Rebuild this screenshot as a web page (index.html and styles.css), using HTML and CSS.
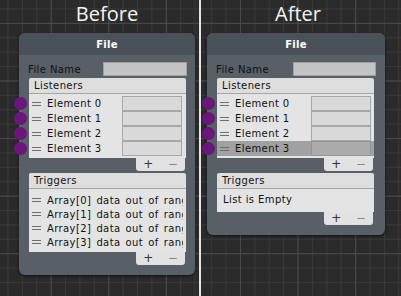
FILE: index.html
```html
<html lang="en">
  <head>
    <meta charset="UTF-8" />
    <meta name="viewport" content="width=device-width, initial-scale=1.0" />
    <title>Before / After</title>
    <link rel="stylesheet" href="styles.css">
  </head>
  <body>
    <div class="stage">
      <section class="half half-before">
        <div class="column column-before">
          <h1 class="caption">Before</h1>
          <div class="node">
            <div class="node-title">File</div>
            <div class="node-body body-before">
              <div class="field-row">
                <label>File Name</label>
                <div class="text-input"></div>
              </div>
              <div class="list">
                <div class="list-header">Listeners</div>
                <div class="list-body">
                  <div class="list-item"><span class="port"></span><span class="handle"></span><span class="item-label">Element 0</span><span class="object-field"></span></div>
                  <div class="list-item"><span class="port"></span><span class="handle"></span><span class="item-label">Element 1</span><span class="object-field"></span></div>
                  <div class="list-item"><span class="port"></span><span class="handle"></span><span class="item-label">Element 2</span><span class="object-field"></span></div>
                  <div class="list-item"><span class="port"></span><span class="handle"></span><span class="item-label">Element 3</span><span class="object-field"></span></div>
                </div>
              </div>
              <div class="list-footer"><span class="add">+</span><span class="remove">&minus;</span></div>
              <div class="list">
                <div class="list-header">Triggers</div>
                <div class="list-body triggers">
                  <div class="list-item short"><span class="handle"></span><span class="item-label">Array[0] data out of range</span></div>
                  <div class="list-item short"><span class="handle"></span><span class="item-label">Array[1] data out of range</span></div>
                  <div class="list-item short"><span class="handle"></span><span class="item-label">Array[2] data out of range</span></div>
                  <div class="list-item short"><span class="handle"></span><span class="item-label">Array[3] data out of range</span></div>
                </div>
              </div>
              <div class="list-footer"><span class="add">+</span><span class="remove">&minus;</span></div>
            </div>
          </div>
        </div>
      </section>
      <div class="divider"></div>
      <section class="half half-after">
        <div class="column column-after">
          <h1 class="caption">After</h1>
          <div class="node">
            <div class="node-title">File</div>
            <div class="node-body body-after">
              <div class="field-row">
                <label>File Name</label>
                <div class="text-input"></div>
              </div>
              <div class="list">
                <div class="list-header">Listeners</div>
                <div class="list-body">
                  <div class="list-item"><span class="port"></span><span class="handle"></span><span class="item-label">Element 0</span><span class="object-field"></span></div>
                  <div class="list-item"><span class="port"></span><span class="handle"></span><span class="item-label">Element 1</span><span class="object-field"></span></div>
                  <div class="list-item"><span class="port"></span><span class="handle"></span><span class="item-label">Element 2</span><span class="object-field"></span></div>
                  <div class="list-item selected"><span class="port"></span><span class="handle"></span><span class="item-label">Element 3</span><span class="object-field"></span></div>
                </div>
              </div>
              <div class="list-footer"><span class="add">+</span><span class="remove">&minus;</span></div>
              <div class="list">
                <div class="list-header">Triggers</div>
                <div class="list-body empty">
                  <div class="empty-label">List is Empty</div>
                </div>
              </div>
              <div class="list-footer"><span class="add">+</span><span class="remove">&minus;</span></div>
            </div>
          </div>
        </div>
      </section>
    </div>
  </body>
</html>
```

FILE: styles.css
```css
body {
  margin: 0;
  background-color: #2b2b2b;
  font-family: "DejaVu Sans", Verdana, sans-serif;
}

.stage {
  display: flex;
  width: 401px;
  height: 296px;
  overflow: hidden;
}

.half {
  height: 296px;
  background-color: #2a2a2a;
  background-image:
    linear-gradient(to right, #4a4a4a 1px, transparent 1px),
    linear-gradient(to bottom, #4a4a4a 1px, transparent 1px),
    linear-gradient(to right, #393939 1px, transparent 1px),
    linear-gradient(to bottom, #393939 1px, transparent 1px);
  background-size: 57.6px 57.6px, 57.6px 57.6px, 14.4px 14.4px, 14.4px 14.4px;
}

.half-before {
  width: 199px;
  padding-left: 19px;
  box-sizing: border-box;
  background-position: 50.7px 22.9px, 50.7px 22.9px, 7.5px 8.5px, 7.5px 8.5px;
}

.half-after {
  flex: 1;
  padding-left: 6px;
  box-sizing: border-box;
  background-position: 39px 22.9px, 39px 22.9px, 10.2px 8.5px, 10.2px 8.5px;
}

.divider {
  width: 2px;
  background-color: #e4e4e4;
}

.column-before {
  width: 176px;
}

.column-after {
  width: 178px;
}

.caption {
  margin: 0;
  height: 33px;
  padding-top: 2px;
  box-sizing: border-box;
  font-family: "Open Sans", sans-serif;
  font-weight: normal;
  font-size: 20px;
  line-height: 24px;
  color: #f4f4f4;
  text-align: center;
}

.column-after .caption {
  padding-left: 4px;
}

.node {
  background-color: #585f67;
  border-radius: 6px;
  box-shadow: 0 1px 3px rgba(0, 0, 0, 0.6);
}

.node-title {
  height: 22px;
  line-height: 23px;
  background-color: #4a5158;
  border-radius: 6px 6px 0 0;
  color: #ffffff;
  font-weight: bold;
  font-size: 10px;
  letter-spacing: 0.3px;
  text-align: center;
}

.node-body {
  display: flex;
  flex-direction: column;
  padding: 7px 9px 10px 10px;
  letter-spacing: 0.4px;
}

.body-after {
  padding-right: 11px;
}

.field-row {
  display: flex;
  justify-content: space-between;
  align-items: center;
  height: 14px;
  margin-right: -1px;
  font-size: 10px;
  color: #111111;
}

.field-row label {
  margin-left: -1px;
}

.text-input {
  width: 84px;
  height: 14px;
  box-sizing: border-box;
  background-color: #c4c4c4;
  border: 1px solid #a0a0a0;
}

.body-after .text-input {
  width: 83px;
  margin-right: -1px;
}

.list {
  margin-top: 2px;
  font-size: 10px;
  color: #111111;
}

.list-header {
  height: 16px;
  line-height: 16px;
  padding-left: 5px;
  box-sizing: border-box;
  background-color: #dedede;
  border-bottom: 1px solid #a6a6a6;
  border-radius: 2px 2px 0 0;
}

.list-body {
  background-color: #e4e4e4;
  padding: 2px 0 2px 0;
}

.list-item {
  position: relative;
  display: flex;
  align-items: center;
  height: 15px;
}

.list-item.short {
  height: 14px;
}

.triggers {
  padding: 4px 0 3px 0;
  word-spacing: 1.5px;
}

.list-item.selected {
  background-color: #a1a1a1;
}

.port {
  position: absolute;
  left: -15px;
  top: 1px;
  width: 13px;
  height: 13px;
  border-radius: 50%;
  background-color: #6a167a;
}

.handle {
  width: 9px;
  height: 2px;
  margin: 0 6px 0 3px;
  border-top: 1px solid #6e6e6e;
  border-bottom: 1px solid #6e6e6e;
  flex-shrink: 0;
}

.item-label {
  flex: 1;
  white-space: nowrap;
  overflow: hidden;
  margin-right: 3px;
}

.object-field {
  width: 60px;
  height: 15px;
  box-sizing: border-box;
  margin-right: 4px;
  background-color: #dadada;
  border: 1px solid #a8a8a8;
}

.body-after .object-field {
  margin-right: 3px;
}

.selected .object-field {
  background-color: #ababab;
  border-color: #959595;
}

.empty {
  padding: 4px 0 5px 6px;
}

.empty-label {
  height: 14px;
  line-height: 14px;
}

.list-footer {
  align-self: flex-end;
  display: flex;
  justify-content: space-around;
  width: 49px;
  height: 13px;
  margin-right: 1px;
  line-height: 13px;
  background-color: #e2e2e2;
  border-radius: 0 0 3px 3px;
  font-size: 12px;
  letter-spacing: 0;
}

.list-footer .add {
  color: #333333;
}

.list-footer .remove {
  color: #8a8a8a;
}
```
